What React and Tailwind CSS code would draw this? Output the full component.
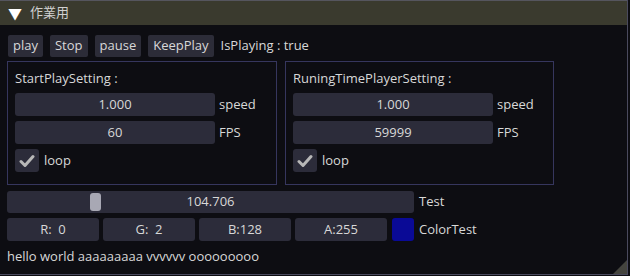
const font = { fontFamily: '"Open Sans", "Noto Sans", "Noto Sans CJK JP", sans-serif' };

const Btn = ({ children }) => (
  <div className="h-[22px] px-[5px] flex items-center bg-[#2c2c38] rounded-[2px]">{children}</div>
);

const Field = ({ value, label }) => (
  <div className="flex items-center gap-[4px]">
    <div className="w-[200px] h-[23px] flex items-center justify-center bg-[#2c2c3a] rounded-[3px]">{value}</div>
    <span>{label}</span>
  </div>
);

const Check = () => (
  <div className="flex items-center gap-[5px]">
    <div className="w-[24px] h-[23px] flex items-center justify-center bg-[#2c2c3a] rounded-[3px]">
      <svg width="16" height="14" viewBox="0 0 16 14">
        <path d="M2 7.5 L6 11.5 L14 2.5" fill="none" stroke="#b8b8b8" strokeWidth="3" strokeLinecap="round" strokeLinejoin="round" />
      </svg>
    </div>
    <span>loop</span>
  </div>
);

const Panel = ({ title, fps, width }) => (
  <div className={`${width} h-[124px] border border-[#36365e] px-[7px] pt-[9px] flex flex-col gap-[5px]`}>
    <div className="h-[16px] flex items-center mb-[1px]">{title}</div>
    <Field value="1.000" label="speed" />
    <Field value={fps} label="FPS" />
    <Check />
  </div>
);

export default function App() {
  return (
    <div className="w-[630px] h-[276px] bg-[#0d0d12] text-[13px] text-[#d8d8d8]" style={font}>
      <div className="w-[628px] h-[275px] border-r border-b border-[#4a4a5e] relative flex flex-col">
        <div className="h-[25px] bg-[#3a3a2e] border-t border-[#55555e] flex items-center px-[8px] gap-[8px]">
          <span className="text-[14px] text-white">▼</span>
          <span className="text-[#d0d0d0]">作業用</span>
        </div>
        <div className="flex flex-col px-[7px] pt-[10px] gap-[4px]">
          <div className="flex items-center gap-[7px] pl-[1px]">
            <Btn>play</Btn>
            <Btn>Stop</Btn>
            <Btn>pause</Btn>
            <Btn>KeepPlay</Btn>
            <span>IsPlaying : true</span>
          </div>
          <div className="flex gap-[8px]">
            <Panel title="StartPlaySetting :" fps="60" width="w-[270px]" />
            <Panel title="RuningTimePlayerSetting :" fps="59999" width="w-[269px]" />
          </div>
          <div className="flex items-center gap-[5px] mt-[2px]">
            <div className="w-[407px] h-[22px] bg-[#2c2c3a] rounded-[3px] flex items-center justify-center relative">
              <div className="absolute left-[83px] top-[2px] w-[11px] h-[18px] bg-[#a8a8b4] rounded-[3px]" />
              <span>104.706</span>
            </div>
            <span>Test</span>
          </div>
          <div className="flex items-center gap-[4px] mt-[1px]">
            {["R:  0", "G:  2", "B:128", "A:255"].map((t) => (
              <div key={t} className="w-[92px] h-[23px] bg-[#2c2c3a] rounded-[3px] flex items-center justify-center whitespace-pre">{t}</div>
            ))}
            <div className="w-[22px] h-[23px] bg-[#0a0a96] rounded-[3px] ml-[1px]" />
            <span className="ml-[1px]">ColorTest</span>
          </div>
          <div className="mt-[2px]">hello world aaaaaaaaa vvvvvv ooooooooo</div>
        </div>
        <div className="absolute right-0 bottom-0 w-0 h-0 border-l-[14px] border-l-transparent border-b-[14px] border-b-[#44443e]" />
      </div>
    </div>
  );
}
